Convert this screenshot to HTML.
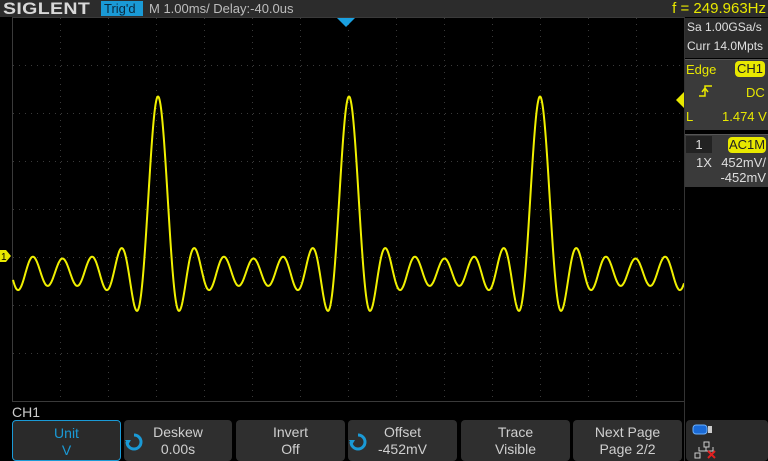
<!DOCTYPE html>
<html><head><meta charset="utf-8"><style>
*{margin:0;padding:0;box-sizing:border-box}
body{width:768px;height:461px;background:#000;position:relative;overflow:hidden;font-family:"Liberation Sans",sans-serif;font-size:13px}
.a{position:absolute;white-space:nowrap}
.btn{position:absolute;top:420px;height:41px;background:#2f2f2f;border-radius:4px;color:#cfcfcf;text-align:center;font-size:14px;line-height:17px;padding-top:4px}
.y{color:#e8e800}
</style></head><body>
<div class="a" style="left:0;top:0;width:768px;height:17px;background:#2c2c2c"></div>
<div class="a" style="left:3px;top:-1px;font-size:17px;font-weight:bold;color:#d8d8d8;letter-spacing:0.3px;transform:scaleX(1.15);transform-origin:left">SIGLENT</div>
<div class="a" style="left:101px;top:1px;width:42px;height:15px;background:#1a9ad6;color:#0a2a40;font-size:13px;line-height:15px;padding-left:3px">Trig'd</div>
<div class="a" style="left:149px;top:1px;color:#bdbdbd;font-size:13px;line-height:15px">M 1.00ms/ Delay:-40.0us</div>
<div class="a y" style="right:2px;top:0px;font-size:15px;line-height:17px">f = 249.963Hz</div>
<svg class="a" style="left:0;top:0" width="768" height="461">
<g id="grid" stroke="#3a3a3a" stroke-width="1" stroke-dasharray="1 5"></g>
<rect x="12.5" y="17.5" width="672" height="384" fill="none" stroke="#3a3a3a"/>
<path id="w" fill="none" stroke="#f0f000" stroke-width="2"/>
<polygon points="337,18 355,18 346,27" fill="#1aa0e0"/>
<polygon points="684,92 684,108 676,100" fill="#e8e800"/>
<polygon points="0,250 6,250 11,256 6,262 0,262" fill="#e8e800"/>
<text x="1" y="260" font-size="10" fill="#000" font-family="Liberation Sans">1</text>
</svg>
<div class="a" style="left:684px;top:17px;width:84px;height:444px;background:#000;border-left:1px solid #333"></div>
<div class="a" style="left:685px;top:18px;width:83px;height:40px;background:#2c2c2c;color:#e0e0e0;font-size:12px;line-height:19px;padding-left:2px">Sa 1.00GSa/s<br>Curr 14.0Mpts</div>
<div class="a" style="left:685px;top:59px;width:83px;height:71px;background:#3a3a3a;border-top:1px solid #555"></div>
<div class="a y" style="left:686px;top:62px;font-size:13px">Edge</div>
<div class="a" style="left:735px;top:61px;width:30px;height:16px;background:#e8e800;border-radius:4px;color:#222;font-size:13px;text-align:center;line-height:16px">CH1</div>
<svg class="a" style="left:698px;top:84px" width="16" height="14"><path d="M1 12H7V2H14M4 8l3-4 3 4" fill="none" stroke="#e8e800" stroke-width="1.5"/></svg>
<div class="a y" style="left:746px;top:85px">DC</div>
<div class="a y" style="left:686px;top:109px">L</div>
<div class="a y" style="left:722px;top:109px">1.474 V</div>
<div class="a" style="left:685px;top:134px;width:83px;height:53px;background:#3a3a3a;border-top:1px solid #555"></div>
<div class="a" style="left:686px;top:136px;width:26px;height:17px;background:#222;color:#ddd;text-align:center;line-height:17px">1</div>
<div class="a" style="left:728px;top:137px;width:38px;height:16px;background:#e8e800;border-radius:4px;color:#222;text-align:center;line-height:16px">AC1M</div>
<div class="a" style="left:696px;top:155px;color:#ddd;font-size:13px">1X</div>
<div class="a" style="right:2px;top:155px;color:#ddd;font-size:13px;text-align:right;line-height:15px">452mV/<br>-452mV</div>
<div class="a" style="left:12px;top:404px;color:#ccc;font-size:14px">CH1</div>
<div class="btn" style="left:12px;width:109px;border:1px solid #1a9ad6;background:#2a2a2a;color:#1a9ad6">Unit<br>V</div>
<div class="btn" style="left:124px;width:108px">Deskew<br>0.00s</div>
<div class="btn" style="left:236px;width:109px">Invert<br>Off</div>
<div class="btn" style="left:348px;width:109px">Offset<br>-452mV</div>
<div class="btn" style="left:461px;width:109px">Trace<br>Visible</div>
<div class="btn" style="left:573px;width:109px">Next Page<br>Page 2/2</div>
<div class="btn" style="left:686px;width:82px;background:#2a2a2a"></div>
<svg class="a" style="left:124px;top:432px" width="20" height="20"><path d="M10 3a7 7 0 1 1-7 7" fill="none" stroke="#1a9ad6" stroke-width="3"/><path d="M1 8h6l-3 5z" fill="#1a9ad6"/></svg>
<svg class="a" style="left:348px;top:432px" width="20" height="20"><path d="M10 3a7 7 0 1 1-7 7" fill="none" stroke="#1a9ad6" stroke-width="3"/><path d="M1 8h6l-3 5z" fill="#1a9ad6"/></svg>
<svg class="a" style="left:692px;top:423px" width="30" height="36"><rect x="1" y="2" width="14" height="9" rx="3" fill="#1a6ad6" stroke="#6ab0ff"/><rect x="16" y="3" width="4" height="7" fill="#ccc"/><path d="M12 19h5v5h-5zM7 24v4h14v-4M14 24v4M3 30h5v5H3z" fill="none" stroke="#ccc"/><path d="M16 28l7 7M23 28l-7 7" stroke="#e02020" stroke-width="2"/></svg>
<script>
var g=document.getElementById('grid'),s='';
for(var i=1;i<14;i++){var x=12.5+48*i;s+='<line x1="'+x+'" y1="18" x2="'+x+'" y2="401"/>';}
for(var j=1;j<8;j++){var y=17.5+48*j;s+='<line x1="13" y1="'+y+'" x2="684" y2="'+y+'"/>';}
g.innerHTML=s;
var d='';
for(var x=13;x<=684;x+=0.5){var t=2*Math.PI*(x-158)/191;var h=Math.sin(t/2);var D=Math.abs(h)<1e-6?13:Math.sin(6.5*t)/h;var y=272-13.5*D;d+=(x==13?'M':'L')+x+' '+y.toFixed(1);}
document.getElementById('w').setAttribute('d',d);
</script>
</body></html>
